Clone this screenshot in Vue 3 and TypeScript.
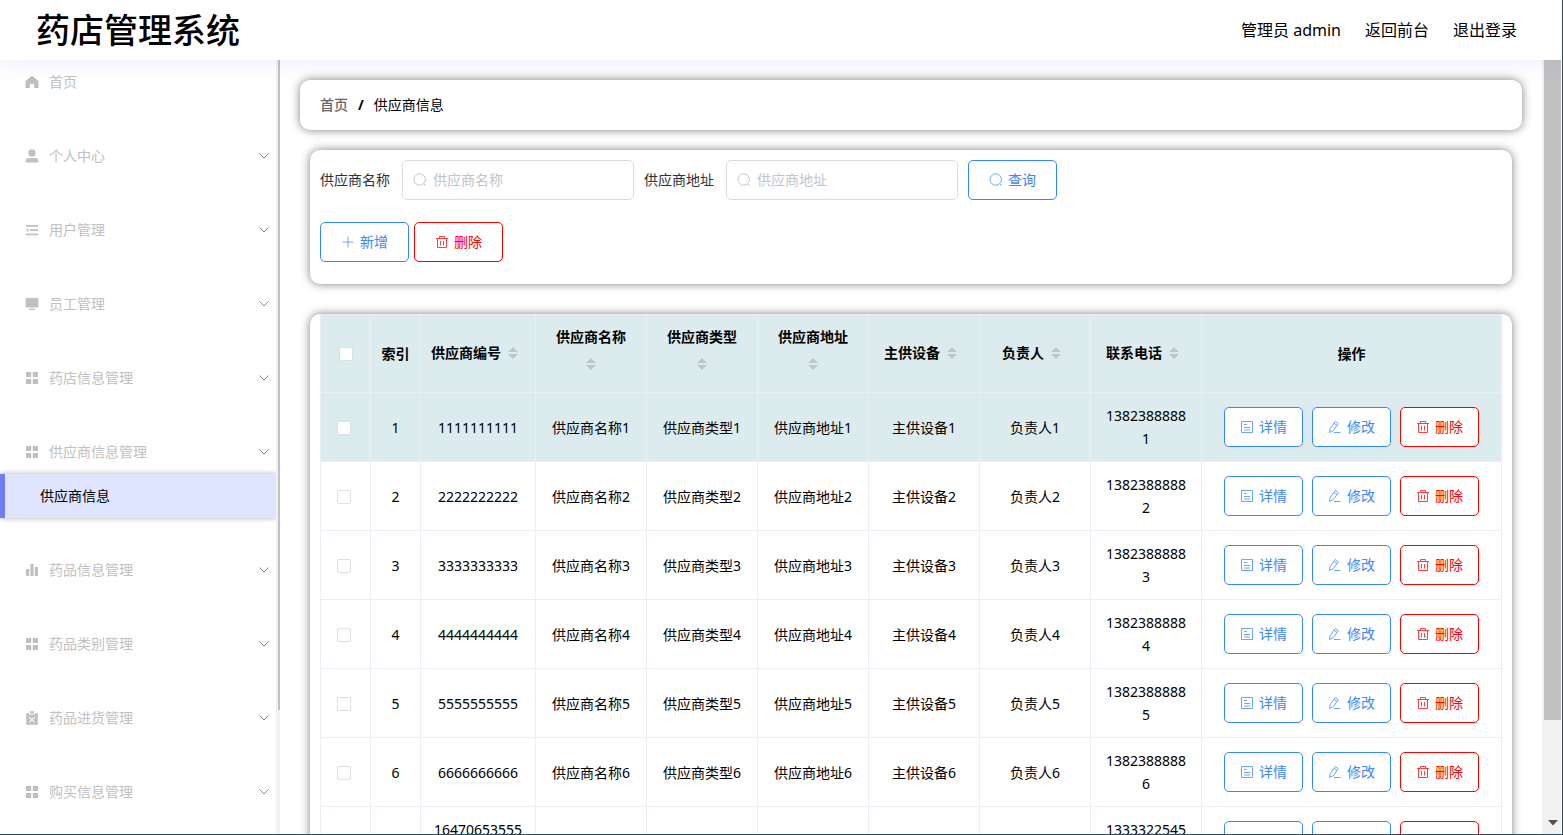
<script setup lang="ts">
import { ref } from 'vue'

type IconName =
  | 'home' | 'user' | 'fold' | 'screen' | 'grid' | 'bars' | 'claim'
  | 'search' | 'plus' | 'trash' | 'ticket' | 'edit'

interface MenuItem {
  label: string
  icon: IconName
  expandable: boolean
  children?: string[]
}

interface Supplier {
  id: number
  code: string
  name: string
  type: string
  address: string
  device: string
  owner: string
  phone: string
}

const icons: Record<IconName, string> = {
  home: '<path fill="currentColor" d="M7 .8 13.500 6v7H9V9H5v4H.5V6z"/>',
  user: '<circle cx="7" cy="4" r="3.700" fill="currentColor"/><path fill="currentColor" d="M.7 13.500v-1.800C.7 10 2 9 3.600 9h6.800c1.600 0 2.900 1 2.900 2.700v1.800z"/>',
  fold: '<path fill="currentColor" d="M1 2h12v1.700H1zM5 6.200h8v1.700H5zM1 10.500h12v1.700H1zM1 7l2.500-2v4z"/>',
  screen: '<path fill="currentColor" d="M.7 1h12.600v9.500H.7zM3 13c0-.8 2.500-1.500 4-1.500s4 .7 4 1.500z"/>',
  grid: '<path fill="currentColor" d="M1 1h5.200v5H1zM7.800 1H13v5H7.800zM1 8h5.200v5H1zM7.800 8H13v5H7.800z"/>',
  bars: '<path fill="currentColor" d="M1 6h3.200v7H1zM5.400 1h3.200v12H5.400zM9.800 4H13v9H9.800z"/>',
  claim: '<path fill="currentColor" fill-rule="evenodd" d="M1.200 2H4v1.500h6V2h2.800v11.800H1.200zM4.700 5.700 4 6.400l2.300 2.300L4 11l.7.700L7 9.400l2.300 2.300.7-.7-2.300-2.300L10 6.400l-.7-.7L7 8z"/><path fill="currentColor" d="M5 .2h4v2.300H5z"/>',
  search: '<g fill="none" stroke="currentColor"><circle cx="6.700" cy="6.500" r="5.700"/><path d="m10.800 10.800 2 2"/></g>',
  plus: '<path fill="none" stroke="currentColor" d="M7 1.500v11M1.500 7h11"/>',
  trash: '<path fill="none" stroke="currentColor" d="M1 3.500h12M4.500 3.500v-2h5v2M2.500 3.500v9h9v-9M5.500 6v4.500M8.500 6v4.500"/>',
  ticket: '<path fill="none" stroke="currentColor" d="M1.500 1.500h11v11h-11zM4 4.500h3M4 7.500h6M4 10h6"/>',
  edit: '<path fill="none" stroke="currentColor" d="M6 12.500h6.500M1.500 12.500l.7-4L7.300 1.500l3 2.200-5 7zM6 3.300l3 2.200"/>',
}

const menu: MenuItem[] = [
  { label: '首页', icon: 'home', expandable: false },
  { label: '个人中心', icon: 'user', expandable: true },
  { label: '用户管理', icon: 'fold', expandable: true },
  { label: '员工管理', icon: 'screen', expandable: true },
  { label: '药店信息管理', icon: 'grid', expandable: true },
  { label: '供应商信息管理', icon: 'grid', expandable: true, children: ['供应商信息'] },
  { label: '药品信息管理', icon: 'bars', expandable: true },
  { label: '药品类别管理', icon: 'grid', expandable: true },
  { label: '药品进货管理', icon: 'claim', expandable: true },
  { label: '购买信息管理', icon: 'grid', expandable: true },
]

const columns: string[] = ['供应商编号', '供应商名称', '供应商类型', '供应商地址', '主供设备', '负责人', '联系电话']

function supplier(id: number, code: string, phone: string): Supplier {
  return {
    id,
    code,
    name: `供应商名称${id}`,
    type: `供应商类型${id}`,
    address: `供应商地址${id}`,
    device: `主供设备${id}`,
    owner: `负责人${id}`,
    phone,
  }
}

const rows: Supplier[] = [
  ...[1, 2, 3, 4, 5, 6].map((n) => supplier(n, String(n).repeat(10), `1382388888${n}`)),
  supplier(7, '1647065355512', '13333225457'),
]

const nameQuery = ref('')
const addressQuery = ref('')
const selected = ref<number[]>([])

function toggleAll(event: Event) {
  selected.value = (event.target as HTMLInputElement).checked ? rows.map((r) => r.id) : []
}
</script>

<template>
  <div class="app">
    <header class="topbar">
      <h1 class="brand">药店管理系统</h1>
      <nav class="account">
        <span>管理员 admin</span>
        <a href="#front">返回前台</a>
        <a href="#logout">退出登录</a>
      </nav>
    </header>

    <div class="body">
      <nav class="sidebar">
        <div v-for="item in menu" :key="item.label" class="group">
          <button type="button" class="item">
            <svg class="icon" viewBox="0 0 14 14" v-html="icons[item.icon]"></svg>
            <span class="item-label">{{ item.label }}</span>
            <svg v-if="item.expandable" class="chevron" viewBox="0 0 12 12">
              <path d="M1.500 3.500 6 8l4.500-4.500" fill="none" stroke="currentColor" />
            </svg>
          </button>
          <a v-for="child in item.children" :key="child" href="#supplier" class="child">{{ child }}</a>
        </div>
      </nav>
      <div class="side-scroll"><div class="side-thumb"></div></div>

      <main class="content">
        <div class="card crumbs">
          <a href="#home">首页</a>
          <b>/</b>
          <span>供应商信息</span>
        </div>

        <form class="card search" @submit.prevent>
          <div class="line">
            <div class="field">
              <label for="q-name">供应商名称</label>
              <div class="box">
                <svg class="icon" viewBox="0 0 14 14" v-html="icons.search"></svg>
                <input id="q-name" v-model="nameQuery" type="text" placeholder="供应商名称" />
              </div>
            </div>
            <div class="field">
              <label for="q-address">供应商地址</label>
              <div class="box">
                <svg class="icon" viewBox="0 0 14 14" v-html="icons.search"></svg>
                <input id="q-address" v-model="addressQuery" type="text" placeholder="供应商地址" />
              </div>
            </div>
            <button type="submit" class="btn wide">
              <svg class="icon" viewBox="0 0 14 14" v-html="icons.search"></svg>
              <span>查询</span>
            </button>
          </div>
          <div class="line tight">
            <button type="button" class="btn wide">
              <svg class="icon" viewBox="0 0 14 14" v-html="icons.plus"></svg>
              <span>新增</span>
            </button>
            <button type="button" class="btn wide danger">
              <svg class="icon" viewBox="0 0 14 14" v-html="icons.trash"></svg>
              <span>删除</span>
            </button>
          </div>
        </form>

        <div class="card list">
          <table>
            <colgroup>
              <col class="c-small" />
              <col class="c-small" />
              <col class="c-code" />
              <col v-for="n in 6" :key="n" />
              <col class="c-actions" />
            </colgroup>
            <thead>
              <tr>
                <th class="pick">
                  <input type="checkbox" aria-label="全选" :checked="selected.length === rows.length" @change="toggleAll" />
                </th>
                <th>索引</th>
                <th v-for="c in columns" :key="c">
                  {{ c }}<span class="sort"><svg viewBox="0 0 10 12"><path d="M5 0l5 5H0zM0 7h10l-5 5z" fill="currentColor" /></svg></span>
                </th>
                <th>操作</th>
              </tr>
            </thead>
            <tbody>
              <tr v-for="row in rows" :key="row.id" :class="{ hover: row.id === 1 }">
                <td>
                  <div class="check">
                    <input v-model="selected" type="checkbox" :value="row.id" :aria-label="row.name" />
                  </div>
                </td>
                <td>{{ row.id }}</td>
                <td>{{ row.code }}</td>
                <td>{{ row.name }}</td>
                <td>{{ row.type }}</td>
                <td>{{ row.address }}</td>
                <td>{{ row.device }}</td>
                <td>{{ row.owner }}</td>
                <td>{{ row.phone }}</td>
                <td>
                  <div class="actions">
                    <button type="button" class="btn">
                      <svg class="icon" viewBox="0 0 14 14" v-html="icons.ticket"></svg>
                      <span>详情</span>
                    </button>
                    <button type="button" class="btn">
                      <svg class="icon" viewBox="0 0 14 14" v-html="icons.edit"></svg>
                      <span>修改</span>
                    </button>
                    <button type="button" class="btn danger">
                      <svg class="icon" viewBox="0 0 14 14" v-html="icons.trash"></svg>
                      <span>删除</span>
                    </button>
                  </div>
                </td>
              </tr>
            </tbody>
          </table>
        </div>
      </main>

      <div class="page-scroll">
        <div class="page-thumb"></div>
        <svg class="arrow" viewBox="0 0 10 6"><path d="M0 0h10L5 5.500z" fill="#505050" /></svg>
      </div>
    </div>
  </div>
</template>

<style>
body {
  margin: 0;
}
</style>

<style scoped>
.app,
.app * {
  box-sizing: border-box;
}

.app {
  display: flex;
  flex-direction: column;
  height: 100vh;
  overflow: hidden;
  border-right: 1px solid #34495a;
  border-bottom: 1px solid #34495a;
  background: #fff;
  color: #000;
  font: 14px/23px "Noto Sans", "Noto Sans CJK SC", sans-serif;
}

a {
  color: inherit;
  text-decoration: none;
}

button,
input {
  font: inherit;
}

.icon {
  flex: none;
  width: 14px;
  height: 14px;
}

.topbar {
  position: relative;
  z-index: 1;
  flex: none;
  display: flex;
  align-items: center;
  justify-content: space-between;
  height: 60px;
  padding: 0 45px 0 36px;
  background: #fff;
  box-shadow: 0 0 24px rgba(90, 100, 220, 0.14);
}

.brand {
  margin: 0;
  padding-bottom: 3px;
  font: 500 34px/48px KaiTi, STKaiti, "Noto Sans CJK SC", sans-serif;
}

.account {
  display: flex;
  gap: 24px;
  font-size: 16px;
}

.body {
  flex: 1;
  display: flex;
  min-height: 0;
  padding-right: 1px;
}

.sidebar {
  flex: none;
  width: 276px;
  overflow: hidden;
}

.group {
  margin-bottom: 30px;
}

.item {
  display: flex;
  align-items: center;
  gap: 10px;
  width: 100%;
  height: 44px;
  padding: 0 6px 0 25px;
  border: 0;
  background: none;
  color: #c0c0c0;
  text-align: left;
}

.item-label {
  flex: 1;
}

.item-label,
.btn span,
.crumbs > *,
.field label {
  padding-bottom: 2px;
}

.chevron {
  width: 12px;
  height: 12px;
  color: #888;
}

.child {
  display: flex;
  align-items: center;
  height: 44px;
  padding: 0 0 2px 35px;
  border-left: 5px solid #757afa;
  background: #dfe4ff;
  box-shadow: 0 0 6px rgba(0, 0, 0, 0.3);
}

.side-scroll {
  flex: none;
  width: 4px;
  padding-left: 2px;
  background: #f1f1f1;
}

.side-thumb {
  height: 84%;
  background: #c1c1c1;
}

.content {
  flex: 1;
  min-width: 0;
  padding: 20px 30px 0;
  overflow: hidden;
}

.card {
  border-radius: 10px;
  background: #fff;
  box-shadow: 0 0 10px rgba(0, 0, 0, 0.5);
}

.crumbs {
  display: flex;
  align-items: center;
  gap: 10px;
  height: 50px;
  margin: 0 -10px 20px;
  padding: 0 20px;
}

.crumbs a {
  color: #666;
  font-weight: 500;
}

.search {
  margin-bottom: 30px;
  padding: 10px 10px 22px;
}

.line {
  display: flex;
  gap: 10px;
}

.line + .line {
  margin-top: 22px;
}

.tight {
  gap: 5px;
}

.field {
  display: flex;
  align-items: center;
  gap: 12px;
  color: #303133;
}

.box {
  display: flex;
  align-items: center;
  gap: 6px;
  width: 232px;
  height: 40px;
  padding: 0 10px;
  border: 1px solid #dcdcdc;
  border-radius: 5px;
  background: #fff;
  color: #c0c4cc;
}

.box input {
  flex: 1;
  min-width: 0;
  height: 38px;
  padding: 0 0 2px;
  border: 0;
  outline: 0;
  background: none;
  color: #303133;
}

.box input::placeholder {
  color: #c0c4cc;
  opacity: 1;
}

.btn {
  display: inline-flex;
  align-items: center;
  gap: 5px;
  height: 40px;
  padding: 0 15px;
  border: 1px solid #338aff;
  border-radius: 5px;
  background: #fff;
  color: #3d86ff;
  white-space: nowrap;
}

.wide {
  padding: 0 20px;
}

.danger {
  border-color: #f00;
  color: #f00;
}

.btn .icon {
  opacity: 0.75;
}

.list {
  padding: 0 10px 10px;
}

table {
  width: 100%;
  table-layout: fixed;
  border-collapse: separate;
  border-spacing: 0;
  border-top: 1px solid #ebeef5;
  border-left: 1px solid #ebeef5;
}

.c-small {
  width: 50px;
}

.c-code {
  width: 115px;
}

.c-actions {
  width: 300px;
}

th,
td {
  border-right: 1px solid #ebeef5;
  border-bottom: 1px solid #ebeef5;
  text-align: center;
  vertical-align: middle;
}

th {
  height: 78px;
  padding: 10px;
  background: #dcebee;
  font-weight: 700;
}

td {
  height: 69px;
  padding: 11px 12px;
  word-break: break-all;
}

.hover td {
  background: #dcebee;
}

.sort {
  display: inline-flex;
  align-items: center;
  justify-content: center;
  width: 24px;
  height: 34px;
  padding-bottom: 2px;
  vertical-align: middle;
  color: #c0c4cc;
}

.sort svg {
  width: 10px;
  height: 12px;
}

.actions {
  display: flex;
  justify-content: center;
  gap: 9px;
}

td:last-child {
  padding: 0;
}

.check {
  display: flex;
  padding-top: 2px;
}

td:first-child {
  padding: 0 16px;
}

.pick {
  padding: 0;
}

input[type="checkbox"] {
  appearance: none;
  display: block;
  width: 14px;
  height: 14px;
  margin: 0;
  border: 1px solid #dcdfe6;
  border-radius: 2px;
  background: #fff;
}

input[type="checkbox"]:checked {
  background: #338aff;
}

.pick input {
  margin: 0 auto;
}

.page-scroll {
  flex: none;
  display: flex;
  flex-direction: column;
  justify-content: space-between;
  align-items: center;
  width: 19px;
  padding: 0 0 6px 2px;
  background: #f1f1f1;
}

.page-thumb {
  width: 100%;
  height: 86%;
  background: #c1c1c1;
}

.arrow {
  width: 10px;
  height: 6px;
  margin-bottom: 2px;
}
</style>
